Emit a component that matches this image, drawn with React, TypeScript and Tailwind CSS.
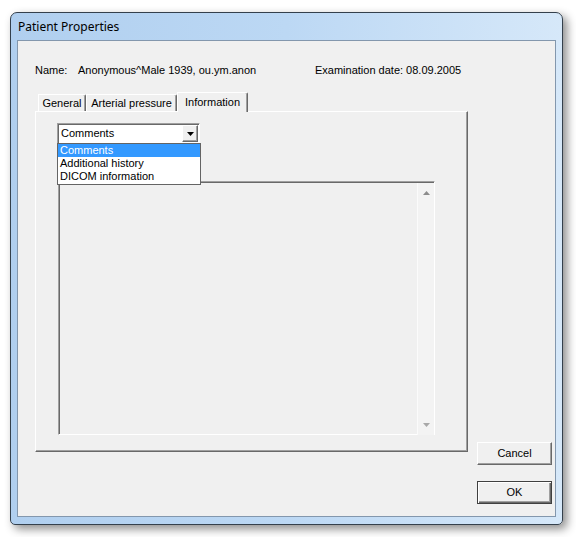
import React from "react";

const ui = { fontFamily: '"Liberation Sans", Arial, sans-serif' };

const Tab = ({ label, w, active }: { label: string; w: string; active?: boolean }) => (
  <div
    className={`${w} ${active ? "h-[20px] -mb-px z-10 bg-[#f0f0f0]" : "h-[17px]"} flex items-center justify-center border-l border-t border-r border-l-white border-t-white border-r-[#696969] rounded-tr-[2px] shadow-[inset_-1px_0_0_#a0a0a0] text-[11px] text-black`}
  >
    {label}
  </div>
);

const Button = ({ label, isDefault }: { label: string; isDefault?: boolean }) => (
  <div
    className={`w-[75px] h-[23px] flex items-center justify-center text-[11px] text-black bg-[#f0f0f0] ${
      isDefault
        ? "border border-[#404040] shadow-[inset_1px_1px_0_#ffffff,inset_-1px_-1px_0_#696969,inset_-2px_-2px_0_#a0a0a0]"
        : "border border-l-white border-t-white border-r-[#696969] border-b-[#696969] shadow-[inset_-1px_-1px_0_#a0a0a0]"
    }`}
  >
    {label}
  </div>
);

export default function App() {
  return (
    <div className="w-[576px] h-[537px] bg-white pl-[10px] pt-[12px]" style={ui}>
      {/* Window */}
      <div className="w-[553px] h-[513px] border border-[#34404c] rounded-t-[7px] rounded-b-[5px] bg-gradient-to-r from-[#b0cfef] via-[#bcd8f4] to-[#d6e8f9] shadow-[4px_4px_10px_rgba(0,0,0,0.45)] flex flex-col px-[6px] pb-[7px]">
        <div className="h-[27px] flex items-center pl-[1px] text-[12px] text-black" style={{ fontFamily: '"Noto Sans", "Liberation Sans", sans-serif' }}>
          Patient Properties
        </div>

        {/* Client area */}
        <div className="w-[539px] h-[477px] border border-[#8397ad] bg-[#f0f0f0] flex flex-col pl-[17px] pt-[23px]">
          <div className="h-[13px] flex items-center text-[11px] text-black">
            <span className="w-[43px]">Name:</span>
            <span className="w-[237px]">Anonymous^Male 1939, ou.ym.anon</span>
            <span>Examination date: 08.09.2005</span>
          </div>

          <div className="flex mt-[15px]">
            {/* Tab control */}
            <div className="w-[433px] flex flex-col">
              <div className="h-[19px] flex items-end pl-[3px]">
                <Tab label="General" w="w-[48px]" />
                <Tab label="Arterial pressure" w="w-[91px]" />
                <Tab label="Information" w="w-[71px]" active />
              </div>
              <div className="h-[341px] border border-l-white border-t-white border-r-[#696969] border-b-[#696969] shadow-[inset_-1px_-1px_0_#a0a0a0] pl-[21px] pt-[11px] flex flex-col">
                {/* Combobox */}
                <div className="relative w-[143px] h-[21px]">
                  <div className="w-full h-full bg-white border border-l-[#a0a0a0] border-t-[#a0a0a0] border-r-white border-b-white shadow-[inset_1px_1px_0_#696969] flex items-center justify-between pl-[3px] pr-[1px] text-[11px] text-black">
                    <span>Comments</span>
                    <div className="w-[16px] h-[17px] bg-[#f0f0f0] border border-l-white border-t-white border-r-[#696969] border-b-[#696969] shadow-[inset_-1px_-1px_0_#a0a0a0] flex items-center justify-center">
                      <svg width="7" height="4" viewBox="0 0 7 4">
                        <path d="M0 0h7L3.5 4z" fill="#000" />
                      </svg>
                    </div>
                  </div>
                  {/* Open list */}
                  <div className="absolute left-0 top-[20px] w-[144px] h-[42px] bg-white border border-[#646464] z-20 flex flex-col text-[11px] text-black">
                    <div className="h-[13px] flex items-center pl-[2px] bg-[#3399ff] text-white">Comments</div>
                    <div className="h-[13px] flex items-center pl-[2px]">Additional history</div>
                    <div className="h-[13px] flex items-center pl-[2px]">DICOM information</div>
                  </div>
                </div>

                {/* Text area */}
                <div className="ml-[1px] mt-[37px] w-[377px] h-[254px] bg-[#f0f0f0] border border-l-[#a0a0a0] border-t-[#a0a0a0] border-r-white border-b-white shadow-[inset_1px_1px_0_#696969] flex justify-end">
                  <div className="w-[17px] h-full mt-[1px] bg-[#f3f3f3] border-l border-[#fbfbfb] flex flex-col items-center justify-between py-[8px]">
                    <svg width="7" height="4" viewBox="0 0 7 4">
                      <path d="M0 4h7L3.5 0z" fill="#8c8c8c" />
                    </svg>
                    <svg width="7" height="4" viewBox="0 0 7 4">
                      <path d="M0 0h7L3.5 4z" fill="#a8a8a8" />
                    </svg>
                  </div>
                </div>
              </div>
            </div>

            {/* Buttons */}
            <div className="ml-[9px] pt-[350px] flex flex-col gap-[16px]">
              <Button label="Cancel" />
              <Button label="OK" isDefault />
            </div>
          </div>
        </div>
      </div>
    </div>
  );
}
